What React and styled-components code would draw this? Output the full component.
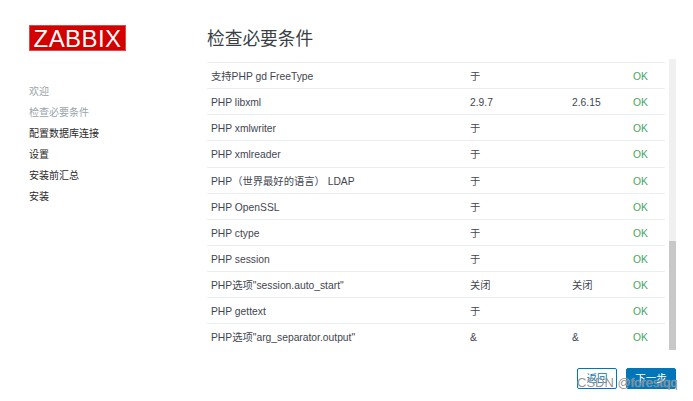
import React from "react";
import styled, { createGlobalStyle } from "styled-components";

const GlobalStyle = createGlobalStyle`
  html, body {
    margin: 0;
    padding: 0;
    background: #fff;
  }
  body {
    font-family: "Liberation Sans", "Noto Sans CJK SC", sans-serif;
  }
`;

const Page = styled.div`
  position: relative;
  width: 693px;
  height: 401px;
  overflow: hidden;
  display: flex;
  background: #fff;
`;

const Sidebar = styled.aside`
  width: 178px;
  padding: 25px 0 0 29px;
  flex-shrink: 0;
`;

const Logo = styled.div`
  box-sizing: border-box;
  width: 97px;
  height: 26px;
  background: #d40000;
  border: 1px solid #e0484c;
  color: #fff;
  font-size: 24px;
  line-height: 25px;
  text-align: center;
  letter-spacing: 0.4px;
`;

const Steps = styled.ul`
  list-style: none;
  margin: 30px 0 0;
  padding: 0;
`;

const Step = styled.li`
  height: 21px;
  line-height: 21px;
  font-size: 10px;
  color: ${(props) => (props.done ? "#9aa5ab" : "#2b2b2b")};
`;

const Main = styled.main`
  width: 469px;
  display: flex;
  flex-direction: column;
`;

const Title = styled.h1`
  margin: 0;
  padding-top: 27px;
  height: 32px;
  font-size: 17.7px;
  line-height: 24px;
  font-weight: 400;
  color: #3a3f44;
`;

const Body = styled.div`
  display: flex;
  justify-content: space-between;
  height: 291px;
`;

const Table = styled.div`
  width: 458px;
  margin-top: 3px;
  border-top: 1px solid #ebeef0;
`;

const Row = styled.div`
  display: grid;
  grid-template-columns: 259px 102px 61px 32px;
  box-sizing: border-box;
  height: 26.15px;
  line-height: 26px;
  padding: 1px 0 0 4px;
  font-size: 10.3px;
  color: #3f4650;
  border-bottom: 1px solid #ebeef0;

  &:last-child {
    border-bottom: 0;
  }
`;

const Ok = styled.span`
  color: #4aa564;
`;

const Scrollbar = styled.div`
  width: 7px;
  height: 100%;
  background: #f0f0f0;
  display: flex;
  flex-direction: column;
  justify-content: flex-end;
`;

const Thumb = styled.div`
  height: 109px;
  background: #c8c8c8;
`;

const Footer = styled.div`
  display: flex;
  justify-content: flex-end;
  gap: 9px;
  margin-top: 18px;
`;

const Button = styled.button`
  box-sizing: border-box;
  height: 21px;
  padding: 0 0 3px;
  border: 1px solid #0275b8;
  border-radius: 2px;
  font-family: inherit;
  font-size: 10.5px;
  width: ${(props) => (props.primary ? "50px" : "40px")};
  background: ${(props) => (props.primary ? "#0275b8" : "#fff")};
  color: ${(props) => (props.primary ? "#fff" : "#0275b8")};
`;

const Watermark = styled.div`
  position: absolute;
  left: 577px;
  top: 375px;
  font-size: 13px;
  line-height: 16px;
  color: rgba(135, 135, 135, 0.9);
  text-shadow: 0 0 1px rgba(255, 255, 255, 0.6);
  white-space: nowrap;
`;

const steps = [
  { label: "欢迎", done: true },
  { label: "检查必要条件", done: true },
  { label: "配置数据库连接" },
  { label: "设置" },
  { label: "安装前汇总" },
  { label: "安装" },
];

const rows = [
  ["支持PHP gd FreeType", "于", ""],
  ["PHP libxml", "2.9.7", "2.6.15"],
  ["PHP xmlwriter", "于", ""],
  ["PHP xmlreader", "于", ""],
  ["PHP（世界最好的语言） LDAP", "于", ""],
  ["PHP OpenSSL", "于", ""],
  ["PHP ctype", "于", ""],
  ["PHP session", "于", ""],
  ["PHP选项\"session.auto_start\"", "关闭", "关闭"],
  ["PHP gettext", "于", ""],
  ["PHP选项\"arg_separator.output\"", "&", "&"],
];

const App = () => {
  return (
    <Page>
      <GlobalStyle />
      <Sidebar>
        <Logo>ZABBIX</Logo>
        <Steps>
          {steps.map((step) => (
            <Step key={step.label} done={step.done}>
              {step.label}
            </Step>
          ))}
        </Steps>
      </Sidebar>
      <Main>
        <Title>检查必要条件</Title>
        <Body>
          <Table>
            {rows.map((row) => (
              <Row key={row[0]}>
                <span>{row[0]}</span>
                <span>{row[1]}</span>
                <span>{row[2]}</span>
                <Ok>OK</Ok>
              </Row>
            ))}
          </Table>
          <Scrollbar>
            <Thumb />
          </Scrollbar>
        </Body>
        <Footer>
          <Button>返回</Button>
          <Button primary>下一步</Button>
        </Footer>
      </Main>
      <Watermark>CSDN @forestqq</Watermark>
    </Page>
  );
};

export default App;
